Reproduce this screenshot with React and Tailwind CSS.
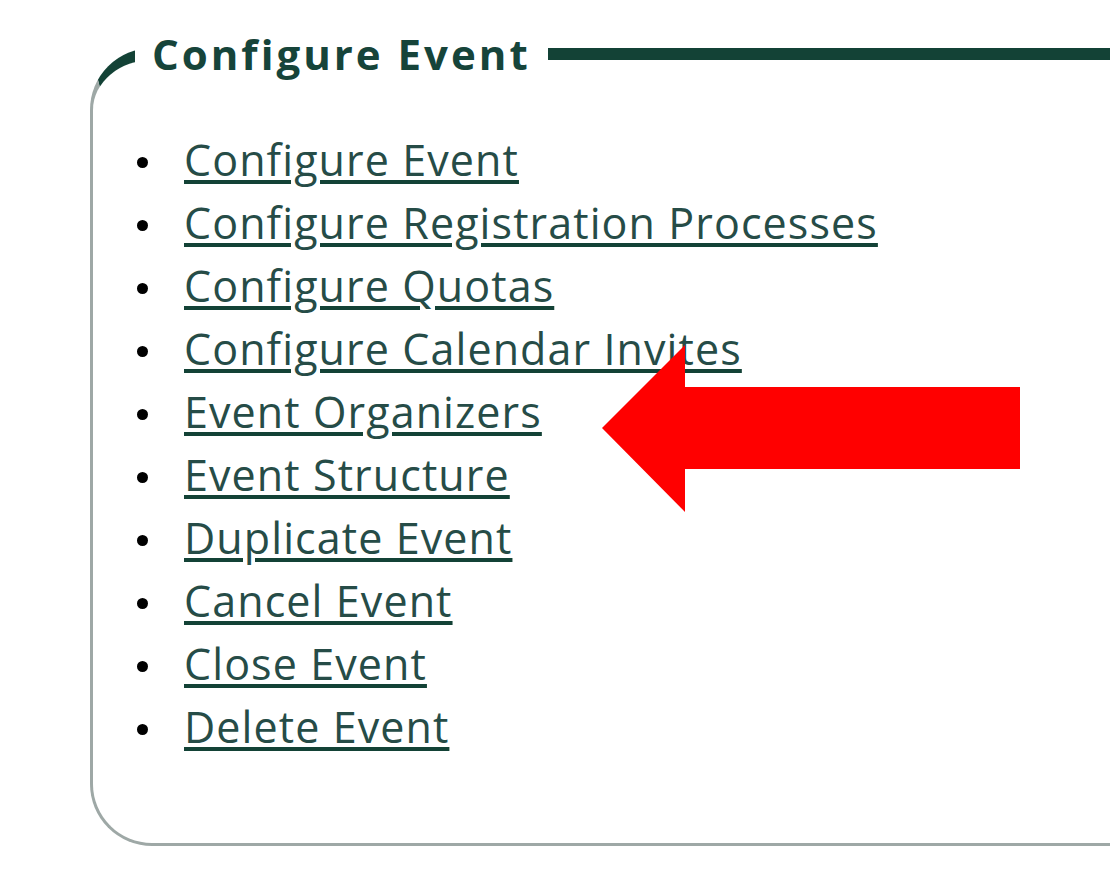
import React from "react";

const items = [
  "Configure Event",
  "Configure Registration Processes",
  "Configure Quotas",
  "Configure Calendar Invites",
  "Event Organizers",
  "Event Structure",
  "Duplicate Event",
  "Cancel Event",
  "Close Event",
  "Delete Event",
];

export default function App() {
  return (
    <div className="relative w-[1110px] h-[887px] overflow-hidden bg-white" style={{ fontFamily: '"Open Sans", "Liberation Sans", sans-serif' }}>
      <div className="pt-[29px] pl-[90px]">
        <fieldset className="w-[1200px] h-[817px] border-t-[12px] border-l-[3px] border-b-[3px] border-r-0 border-t-[#134236] border-l-[#9ea8a6] border-b-[#9ea8a6] rounded-tl-[62px] rounded-bl-[62px]">
          <legend className="ml-[42px] px-[17px] text-[42px] leading-[50px] font-bold text-[#16443a] tracking-[3px]">
            Configure Event
          </legend>
          <ul className="pt-[49px] pl-[44px]">
            {items.map((t) => (
              <li key={t} className="flex items-center h-[63px]">
                <span className="w-[11px] h-[11px] rounded-full bg-black mt-[6px]" />
                <a
                  href="#"
                  className="ml-[36px] text-[43px] leading-[63px] text-[#264c47] underline decoration-[#134236] decoration-[4px] underline-offset-[4px] tracking-[1.1px]"
                >
                  {t}
                </a>
              </li>
            ))}
          </ul>
        </fieldset>
      </div>
      <svg className="absolute left-0 top-0" width="1110" height="887" viewBox="0 0 1110 887">
        <polygon points="602,428 685,345 685,387 1020,387 1020,469 685,469 685,512" fill="#ff0000" />
      </svg>
    </div>
  );
}
